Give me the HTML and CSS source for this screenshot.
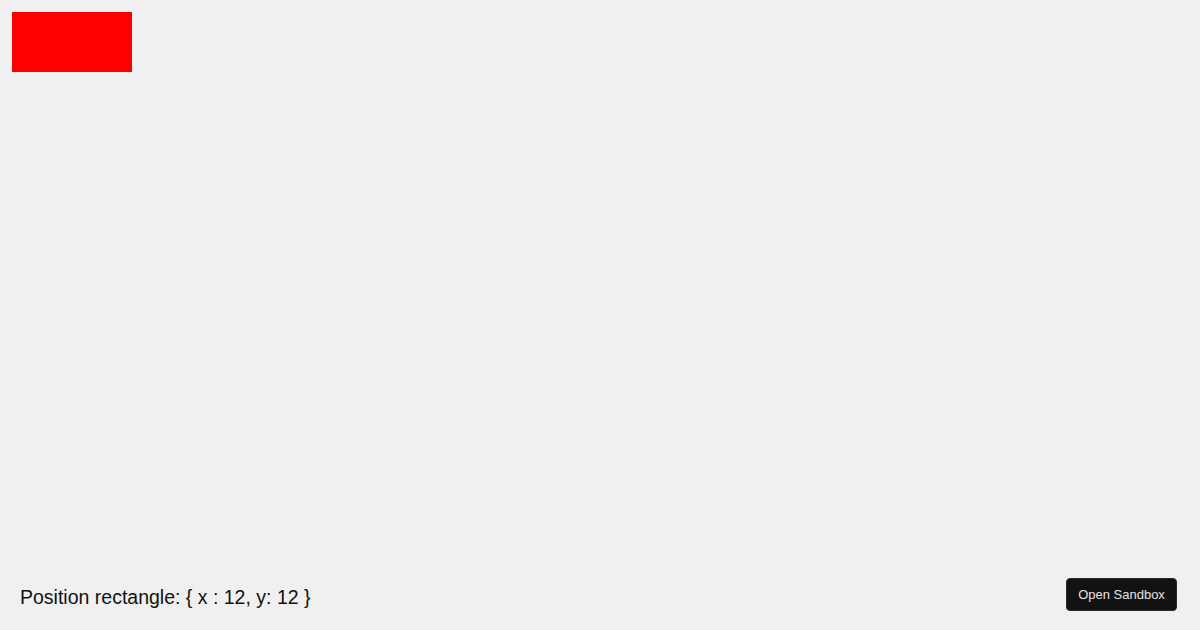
FILE: index.html
```html
<!DOCTYPE html>
<html>
<head>
<meta charset="utf-8">
<link rel="stylesheet" href="styles.css">
</head>
<body>
<div class="page">
  <div class="canvas">
    <div class="rect"></div>
  </div>
  <div class="footer">
    <div class="label">Position rectangle: { x : 12, y: 12 }</div>
    <button class="sandbox">Open Sandbox</button>
  </div>
</div>
</body>
</html>
```

FILE: styles.css
```css
html, body {
  margin: 0;
  padding: 0;
  background: #f0f0f0;
}
.page {
  width: 1200px;
  height: 630px;
  display: flex;
  flex-direction: column;
  overflow: hidden;
}
.canvas {
  flex: 1;
  position: relative;
}
.rect {
  position: absolute;
  left: 12px;
  top: 12px;
  width: 120px;
  height: 60px;
  background: #ff0000;
}
.footer {
  display: flex;
  justify-content: space-between;
  align-items: flex-end;
  padding: 0 23px 19px 20px;
}
.label {
  font-family: "Liberation Sans", Arial, sans-serif;
  font-size: 19.5px;
  line-height: 23px;
  color: #111;
  margin-bottom: 2px;
}
.sandbox {
  font-family: "Liberation Sans", Arial, sans-serif;
  font-size: 13px;
  color: #e4e4e4;
  background: #121212;
  border: 1px solid #2a2a2a;
  border-radius: 4px;
  height: 33px;
  width: 111px;
  padding: 0;
  cursor: pointer;
}
```
